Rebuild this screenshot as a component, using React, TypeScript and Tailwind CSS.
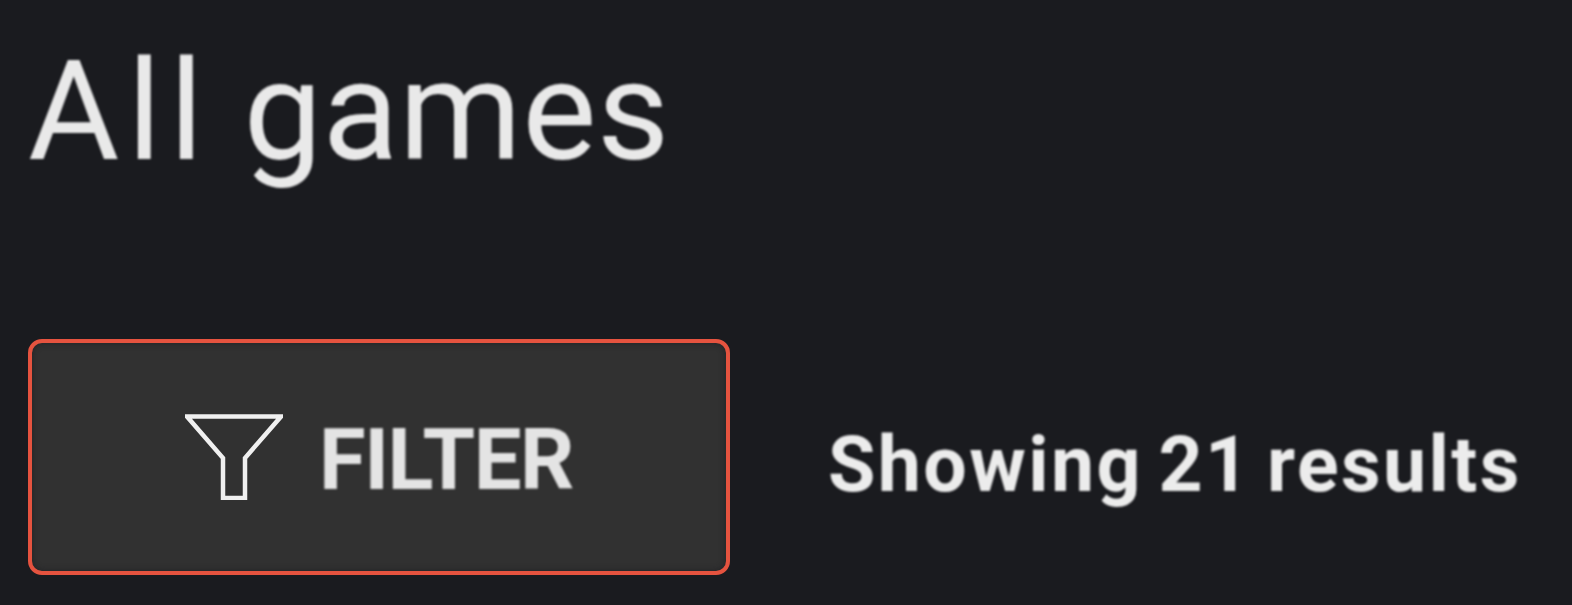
export default function App() {
  return (
    <div className="w-[1572px] h-[605px] bg-[#1a1b1f] overflow-hidden font-['Roboto',sans-serif] pl-7">
      <h1 className="text-[#e9e9e9] text-[140px] leading-[150px] font-normal pt-9 h-[339px] tracking-[0.4px] [word-spacing:-3px] blur-[1px]">
        <span className="tracking-[8px]">All</span> games
      </h1>
      <div className="flex items-center gap-[98px]">
        <button className="w-[702px] h-[236px] shrink-0 bg-[#313131] border-4 border-[#e5533f] rounded-[14px] shadow-[inset_0_0_6px_rgba(26,27,31,0.7)] flex items-center justify-center gap-9">
          <svg className="-mt-px blur-[0.6px]" width="98" height="86" viewBox="0 0 98 86" fill="none" stroke="#f0f0f0" strokeWidth="4.5">
            <path d="M2 2.5H96L60 44V84H38V44Z" />
          </svg>
          <span className="text-[#e4e4e4] text-[85px] leading-none font-bold tracking-[-1.5px] pt-[7px] blur-[0.8px]">FILTER</span>
        </button>
        <span className="text-[#ececec] text-[77px] leading-none font-bold tracking-[2.4px] [word-spacing:-6px] pt-4 blur-[0.8px] whitespace-nowrap">Showing 21 results</span>
      </div>
    </div>
  );
}
